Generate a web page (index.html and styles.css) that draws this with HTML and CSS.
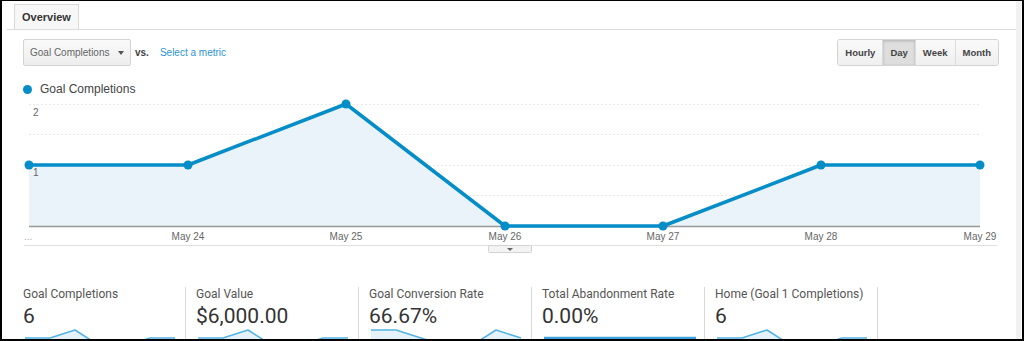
FILE: index.html
```html
<!DOCTYPE html>
<html>
<head>
<meta charset="utf-8">
<link rel="stylesheet" href="styles.css">
</head>
<body>
<div class="frame">
  <div class="main">
    <div class="tabs"><div class="tab">Overview</div></div>
    <div class="toolbar">
      <div class="left">
        <div class="select"><span>Goal Completions</span><span class="caret"></span></div>
        <span class="vs">vs.</span>
        <span class="metric">Select a metric</span>
      </div>
      <div class="btn-group">
        <span class="btn">Hourly</span><span class="btn active">Day</span><span class="btn">Week</span><span class="btn">Month</span>
      </div>
    </div>
    <div class="legend"><span class="dot"></span>Goal Completions</div>
    <svg class="chart" width="1014" height="160" viewBox="2 98 1014 160">
      <g stroke="#e9e9e9" stroke-width="1" stroke-dasharray="2 2">
        <line x1="29" x2="980" y1="104.5" y2="104.5"/>
        <line x1="29" x2="980" y1="134.5" y2="134.5"/>
        <line x1="29" x2="980" y1="165.5" y2="165.5"/>
        <line x1="29" x2="980" y1="195.5" y2="195.5"/>
      </g>
      <polygon fill="#e9f3f9" points="29,226 29,165 188,165 346,104 505,226 663,226 821,165 980,165 980,226"/>
      <line x1="29" x2="980" y1="226.5" y2="226.5" stroke="#999" stroke-width="1.5"/>
      <polyline fill="none" stroke="#058dc7" stroke-width="3.5" stroke-linejoin="round" points="29,165 188,165 346,104 505,226 663,226 821,165 980,165"/>
      <g fill="#058dc7">
        <circle cx="29" cy="165" r="4.5"/>
        <circle cx="188" cy="165" r="4.5"/>
        <circle cx="346" cy="104" r="4.5"/>
        <circle cx="505" cy="226" r="4.5"/>
        <circle cx="663" cy="226" r="4.5"/>
        <circle cx="821" cy="165" r="4.5"/>
        <circle cx="980" cy="165" r="4.5"/>
      </g>
      <g class="axis" fill="#666" font-size="10">
        <text x="33" y="116">2</text>
        <text x="33" y="176">1</text>
        <text x="24" y="240" fill="#aaa">...</text>
      </g>
      <g class="axis" fill="#666" font-size="10" text-anchor="middle">
        <text x="188" y="240">May 24</text>
        <text x="346" y="240">May 25</text>
        <text x="505" y="240">May 26</text>
        <text x="663" y="240">May 27</text>
        <text x="821" y="240">May 28</text>
        <text x="980" y="240">May 29</text>
      </g>
      <line x1="24" x2="997" y1="245.5" y2="245.5" stroke="#e0e0e0"/>
      <rect x="488.5" y="245.5" width="43" height="7" rx="1" fill="#f3f3f3" stroke="#d3d3d3"/>
      <path d="M507 248 h6 l-3 3 z" fill="#666"/>
    </svg>
    <div class="cards">
      <div class="card">
        <div class="card-title">Goal Completions</div>
        <div class="card-value">6</div>
        <svg class="spark" width="162" height="20" viewBox="0 0 162 20">
          <polygon class="sfill" points="2,20 2,10 27,10 52,2 77,18 102,18 127,10 152,10 152,20"/>
          <polyline class="sline" points="2,10 27,10 52,2 77,18 102,18 127,10 152,10"/>
        </svg>
      </div>
      <div class="card">
        <div class="card-title">Goal Value</div>
        <div class="card-value">$6,000.00</div>
        <svg class="spark" width="162" height="20" viewBox="0 0 162 20">
          <polygon class="sfill" points="2,20 2,10 27,10 52,2 77,18 102,18 127,10 152,10 152,20"/>
          <polyline class="sline" points="2,10 27,10 52,2 77,18 102,18 127,10 152,10"/>
        </svg>
      </div>
      <div class="card">
        <div class="card-title">Goal Conversion Rate</div>
        <div class="card-value">66.67%</div>
        <svg class="spark" width="162" height="20" viewBox="0 0 162 20">
          <polygon class="sfill" points="2,20 2,2 27,2 52,10 77,18 102,18 127,2 152,10 152,20"/>
          <polyline class="sline" points="2,2 27,2 52,10 77,18 102,18 127,2 152,10"/>
        </svg>
      </div>
      <div class="card">
        <div class="card-title">Total Abandonment Rate</div>
        <div class="card-value">0.00%</div>
        <svg class="spark" width="162" height="20" viewBox="0 0 162 20">
          <polyline class="sline flat" points="2,10 154,10"/>
        </svg>
      </div>
      <div class="card">
        <div class="card-title">Home (Goal 1 Completions)</div>
        <div class="card-value">6</div>
        <svg class="spark" width="162" height="20" viewBox="0 0 162 20">
          <polygon class="sfill" points="2,20 2,10 27,10 52,2 77,18 102,18 127,10 152,10 152,20"/>
          <polyline class="sline" points="2,10 27,10 52,2 77,18 102,18 127,10 152,10"/>
        </svg>
      </div>
    </div>
  </div>
  <div class="stripe"></div>
</div>
</body>
</html>
```

FILE: styles.css
```css
html, body {
  margin: 0;
  padding: 0;
  background: #fff;
}

.frame {
  width: 1024px;
  height: 341px;
  box-sizing: border-box;
  border-style: solid;
  border-color: #000;
  border-width: 1px 2px 2px 2px;
  display: flex;
  overflow: hidden;
  font-family: "Liberation Sans", Arial, sans-serif;
  background: #fff;
}

.main {
  width: 1014px;
  flex: none;
}

.stripe {
  width: 5px;
  flex: none;
  background: #f1f1f1;
}

.tabs {
  display: flex;
  align-items: flex-end;
  height: 25px;
  margin-left: 5px;
  padding: 3px 0 0 7px;
  border-bottom: 1px solid #dcdcdc;
}

.tab {
  height: 25px;
  box-sizing: border-box;
  width: 65px;
  padding: 0 7px;
  border: 1px solid #d9d9d9;
  border-bottom: 0;
  background: #f7f7f7;
  font-size: 11px;
  font-weight: bold;
  line-height: 24px;
  color: #333;
}

.toolbar {
  display: flex;
  justify-content: space-between;
  align-items: center;
  height: 27px;
  margin-top: 9px;
  padding: 0 17px 0 21px;
}

.left {
  display: flex;
  align-items: center;
}

.select {
  width: 108px;
  height: 27px;
  box-sizing: border-box;
  display: flex;
  align-items: center;
  justify-content: space-between;
  padding: 0 6px 0 6px;
  border: 1px solid #d3d3d3;
  border-radius: 2px;
  background: linear-gradient(#fafafa, #ededed);
  font-size: 10px;
  color: #666;
}

.caret {
  width: 0;
  height: 0;
  border-left: 3px solid transparent;
  border-right: 3px solid transparent;
  border-top: 4px solid #555;
}

.vs {
  margin-left: 4px;
  font-size: 10px;
  font-weight: bold;
  color: #444;
}

.metric {
  margin-left: 11px;
  font-size: 10px;
  color: #2b95d6;
}

.btn-group {
  display: flex;
  border: 1px solid #d3d3d3;
  border-radius: 3px;
  overflow: hidden;
}

.btn {
  height: 25px;
  line-height: 25px;
  padding: 0 7px;
  font-size: 9.5px;
  font-weight: bold;
  color: #444;
  background: linear-gradient(#fafafa, #efefef);
  border-left: 1px solid #dcdcdc;
}

.btn:first-child {
  border-left: 0;
}

.btn.active {
  background: #dedede;
  box-shadow: inset 0 1px 3px rgba(0, 0, 0, 0.2);
}

.legend {
  display: flex;
  align-items: center;
  height: 14px;
  margin-top: 16px;
  padding-left: 21px;
  font-size: 12px;
  color: #444;
}

.dot {
  width: 9px;
  height: 9px;
  border-radius: 50%;
  background: #058dc7;
  margin-right: 8px;
}

.chart {
  display: block;
  margin-top: 2px;
}

.axis {
  font-family: "Liberation Sans", Arial, sans-serif;
}

.cards {
  display: flex;
  height: 52px;
  margin-top: 29px;
  padding-left: 21px;
}

.card {
  width: 162px;
  padding-left: 10px;
  border-right: 1px solid #d8d8d8;
  overflow: hidden;
}

.card:first-child {
  padding-left: 0;
}

.card-title {
  font-family: Roboto, "Liberation Sans", sans-serif;
  font-size: 12px;
  line-height: 14px;
  color: #555;
  white-space: nowrap;
}

.card-value {
  font-family: Roboto, "Liberation Sans", sans-serif;
  font-size: 21px;
  line-height: 22px;
  margin-top: 4px;
  color: #333;
}

.spark {
  display: block;
  margin-top: 1px;
}

.sfill {
  fill: #e6f2f9;
}

.sline {
  fill: none;
  stroke: #55b3e4;
  stroke-width: 1.6;
  stroke-linejoin: round;
}

.sline.flat {
  stroke: #3ea3dc;
  stroke-width: 2.5;
}
```
